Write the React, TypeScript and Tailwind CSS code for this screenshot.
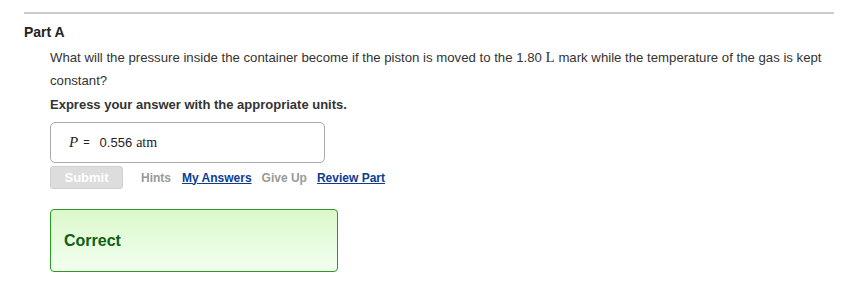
export default function App() {
  return (
    <div className="h-[304px] w-[847px] bg-white pl-6 pr-[13px] pt-3 font-['Liberation_Sans',Arial,sans-serif] text-[#333]">
      <div className="h-[2px] bg-[#cccccc]" />
      <h2 className="mt-[9px] text-[14px] font-bold leading-[18px] text-[#222]">Part A</h2>
      <div className="pl-[26px]">
        <p className="mt-[5px] text-[13.2px] leading-[23px] text-[#333]">
          What will the pressure inside the container become if the piston is moved to the 1.80{" "}
          <span className="font-['Liberation_Serif',serif] text-[15px] leading-[15px]">L</span> mark while the temperature of the gas is kept
          constant?
        </p>
        <p className="mt-[1px] text-[13px] font-bold leading-[23px] text-[#333]">
          Express your answer with the appropriate units.
        </p>
        <div className="mt-[6px] flex h-[41px] w-[275px] items-center rounded-[5px] border border-[#aaaaaa] pl-[18px] text-[13px] text-[#222]">
          <span className="font-['Liberation_Serif',serif] text-[15px] italic">P</span>
          <span className="ml-[5px] text-[11px]">=</span>
          <span className="ml-[10px]">0.556</span>
          <span className="ml-[4px] font-['Liberation_Serif',serif] text-[14px]">atm</span>
        </div>
        <div className="mt-[3px] flex items-center text-[12px] font-bold">
          <button
            type="button"
            disabled
            className="h-[23px] w-[73px] rounded-[3px] border border-[#d0d0d0] bg-[#dddddd] text-[13px] font-bold text-white"
          >
            Submit
          </button>
          <span className="ml-[18px] text-[#999999]">Hints</span>
          <a className="ml-[11px] text-[#0b3d91] underline">My Answers</a>
          <span className="ml-[10px] text-[#999999]">Give Up</span>
          <a className="ml-[10px] text-[#0b3d91] underline">Review Part</a>
        </div>
        <div className="mt-[20px] flex h-[63px] w-[288px] items-center rounded-[4px] border border-[#2a9a20] bg-gradient-to-b from-[#dbf8cb] to-[#f2fff0] pl-[13px]">
          <span className="text-[16px] font-bold text-[#0f5f10]">Correct</span>
        </div>
      </div>
    </div>
  );
}
